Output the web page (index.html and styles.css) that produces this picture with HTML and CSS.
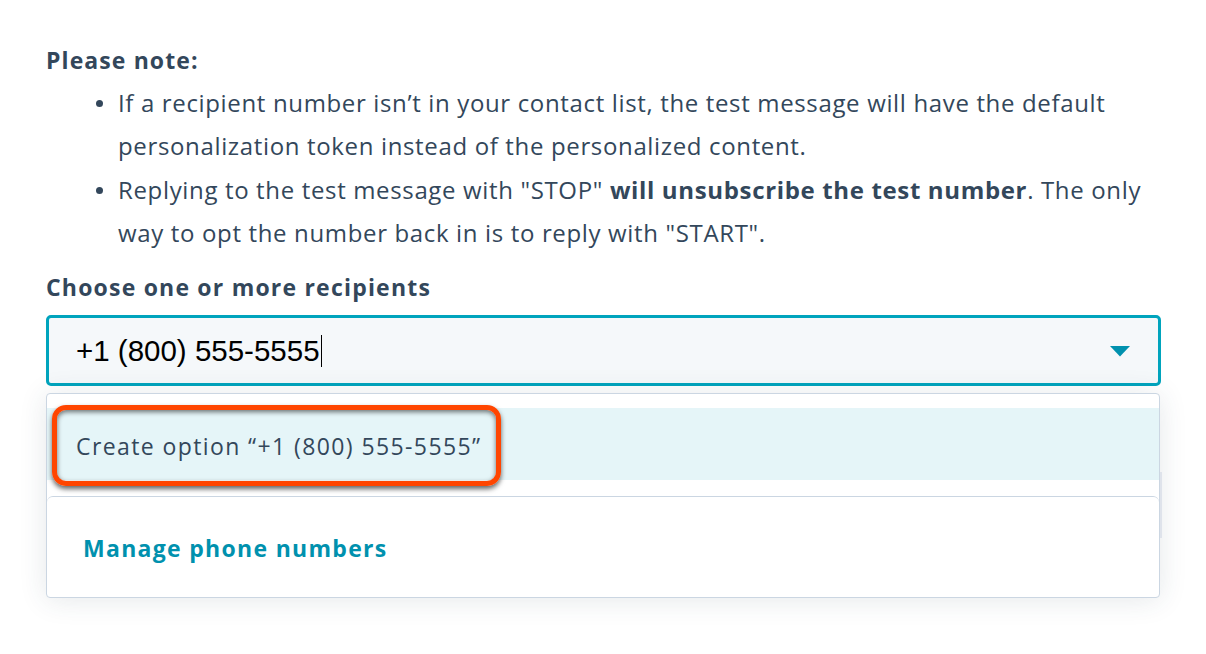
FILE: index.html
```html
<!DOCTYPE html>
<html>
<head>
<meta charset="utf-8">
<link rel="stylesheet" href="styles.css">
</head>
<body>
<div class="page">
  <p class="note-title">Please note:</p>
  <ul class="notes">
    <li>If a recipient number isn’t in your contact list, the test message will have the default<br>personalization token instead of the personalized content.</li>
    <li>Replying to the test message with "STOP" <b>will unsubscribe the test number</b>. The only<br>way to opt the number back in is to reply with "START".</li>
  </ul>
  <label class="field-label">Choose one or more recipients</label>
  <div class="select">
    <span class="select-value">+1 (800) 555-5555</span><span class="cursor"></span>
    <svg class="caret" width="20" height="11" viewBox="0 0 20 11"><path d="M0 0 H20 L10 10.5 Z" fill="#0091ae"/></svg>
  </div>
  <div class="dropdown">
    <div class="option">
      <span class="option-text">Create option “+1 (800) 555-5555”</span>
      <span class="highlight"></span>
    </div>
    <div class="footer">
      <a class="manage">Manage phone numbers</a>
    </div>
    <span class="ghost-edge"></span>
  </div>
</div>
</body>
</html>
```

FILE: styles.css
```css
* { box-sizing: border-box; }
html, body { margin: 0; padding: 0; background: #ffffff; }
body {
  font-family: "Open Sans", "Noto Sans", sans-serif;
  color: #33475b;
  width: 1206px;
  height: 654px;
  overflow: hidden;
}
.page {
  padding: 46px 0 0 46px;
  width: 1162px;
}
.note-title {
  margin: 0;
  font-size: 23px;
  font-weight: 700;
  line-height: 28px;
  letter-spacing: 1.1px;
}
.notes {
  margin: 7px 0 0 0;
  padding: 0 0 0 72px;
  font-size: 24px;
  line-height: 43.3px;
  letter-spacing: 0.65px;
  list-style: none;
  white-space: nowrap;
}
.notes li {
  position: relative;
}
.notes li::before {
  content: "";
  position: absolute;
  left: -22px;
  top: 19px;
  width: 7px;
  height: 7px;
  border-radius: 50%;
  background: #33475b;
}
.notes b { font-weight: 700; }
.field-label {
  display: block;
  margin-top: 19px;
  font-size: 23px;
  font-weight: 700;
  line-height: 28px;
  letter-spacing: 1.2px;
}
.select {
  margin-top: 14px;
  height: 71px;
  width: 1115px;
  border: 3px solid #00a4bd;
  border-radius: 5px;
  background: #f5f8fa;
  display: flex;
  align-items: center;
  padding: 0 28px 0 27px;
}
.select-value {
  font-family: "Liberation Sans", "Noto Sans", sans-serif;
  font-size: 29.5px;
  color: #000000;
}
.cursor {
  display: inline-block;
  width: 1.5px;
  height: 32px;
  background: #000;
  margin-left: 1px;
}
.caret { margin-left: auto; margin-top: 2px; }
.dropdown {
  position: relative;
  margin-top: 7px;
  width: 1114px;
  height: 205px;
  border: 1px solid #cbd6e2;
  border-radius: 4px;
  background: #ffffff;
  box-shadow: 0 2px 28px rgba(45, 62, 80, 0.12);
  padding-top: 14px;
}
.option {
  position: relative;
  height: 72px;
  background: #e5f5f8;
  display: flex;
  align-items: center;
  padding-left: 29px;
}
.option-text {
  font-size: 23px;
  letter-spacing: 1.4px;
  color: #33475b;
  margin-top: 3px;
}
.highlight {
  position: absolute;
  left: 5px;
  top: -3px;
  width: 449px;
  height: 81px;
  border: 5px solid #ff4500;
  border-radius: 14px;
  box-shadow: 0 3px 5px rgba(0,0,0,0.6), inset 0 2px 5px rgba(0,0,0,0.55);
}
.footer {
  margin-top: 16px;
  height: 102px;
  border-top: 1px solid #cbd6e2;
  border-radius: 6px 6px 0 0;
  display: flex;
  align-items: center;
  padding-left: 36px;
}
.manage {
  font-size: 23px;
  font-weight: 700;
  color: #0091ae;
  letter-spacing: 1.3px;
  margin-top: 0;
}
.ghost-edge {
  position: absolute;
  right: -3px;
  top: 78px;
  width: 2px;
  height: 66px;
  background: #dfe3eb;
}
```
